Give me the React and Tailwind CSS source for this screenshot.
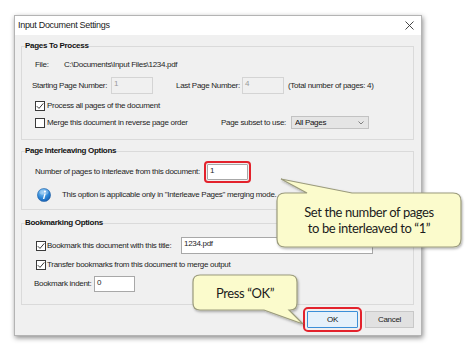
import React from "react";

function Check({ checked }) {
  return (
    <span className="w-[10px] h-[10px] border border-[#3a3a3a] bg-white flex items-center justify-center shrink-0">
      {checked && (
        <svg width="8" height="8" viewBox="0 0 8 8">
          <path d="M0.8 4.2 L3 6.4 L7.3 1.4" fill="none" stroke="#222" strokeWidth="0.9" />
        </svg>
      )}
    </span>
  );
}

function Group({ title, children, className = "" }) {
  return (
    <fieldset className={"border border-[#dadada] " + className}>
      <legend className="ml-[3px] px-0 font-bold leading-[10px] text-[8px] tracking-[-0.3px] text-[#111]">
        {title}
      </legend>
      {children}
    </fieldset>
  );
}

function InfoIcon() {
  return (
    <svg width="14" height="14" viewBox="0 0 14 14" className="shrink-0">
      <defs>
        <radialGradient id="ig" cx="0.4" cy="0.3" r="0.8">
          <stop offset="0" stopColor="#8cc8f5" />
          <stop offset="0.55" stopColor="#2c86d6" />
          <stop offset="1" stopColor="#1456a8" />
        </radialGradient>
      </defs>
      <circle cx="7" cy="7" r="6.6" fill="url(#ig)" stroke="#1a5aa0" strokeWidth="0.5" />
      <ellipse cx="7" cy="4.2" rx="4.6" ry="2.6" fill="#ffffff" opacity="0.25" />
      <circle cx="7.9" cy="3.6" r="1.1" fill="#fff" />
      <path d="M7.4 5.6 L5.9 11 L7.3 11 L8.8 5.6 Z" fill="#fff" />
    </svg>
  );
}

export default function App() {
  return (
    <div className="relative w-[474px] h-[351px] bg-white overflow-hidden font-['Liberation_Sans',Arial,sans-serif] text-[8px] tracking-[-0.3px] text-[#1e1e1e]">
      <div className="ml-[14px] mt-[15px] w-[408px] h-[321px] border border-[#b4b4b4] shadow-[1px_2px_5px_rgba(0,0,0,0.45)] flex flex-col">
        {/* title bar */}
        <div className="h-[19px] bg-white flex items-center justify-between pl-[3px] pr-[7px] shrink-0">
          <span className="text-[9px] text-[#222]">Input Document Settings</span>
          <svg width="9" height="9" viewBox="0 0 9 9">
            <path d="M0.5 0.5 L8.5 8.5 M8.5 0.5 L0.5 8.5" stroke="#333" strokeWidth="0.9" />
          </svg>
        </div>
        {/* body */}
        <div className="flex-1 bg-[#f0f0f0] pl-[6px] pr-[7px] pt-[6px] flex flex-col">
          <Group title="Pages To Process">
            <div className="pt-[8px] pb-[10px] flex flex-col">
              <div className="h-[12px] flex items-center pl-[13px]">
                <span className="w-[29px]">File:</span>
                <span>C:\Documents\Input Files\1234.pdf</span>
              </div>
              <div className="mt-[6px] h-[17px] flex items-center pl-[10px]">
                <span className="w-[79px]">Starting Page Number:</span>
                <div className="w-[42px] h-[17px] border border-[#d4d4d4] bg-[#f0f0f0] text-[#9a9a9a] pl-[2px] leading-[11px]">1</div>
                <span className="ml-[23px] w-[66px]">Last Page Number:</span>
                <div className="w-[42px] h-[17px] border border-[#d4d4d4] bg-[#f0f0f0] text-[#9a9a9a] pl-[2px] leading-[11px]">4</div>
                <span className="ml-[4px]">(Total number of pages: 4)</span>
              </div>
              <div className="mt-[6px] h-[12px] flex items-center pl-[13px] gap-[2px]">
                <Check checked />
                <span>Process all pages of the document</span>
              </div>
              <div className="mt-[4px] h-[13px] flex items-center pl-[13px]">
                <Check />
                <span className="ml-[2px] w-[174px]">Merge this document in reverse page order</span>
                <span className="w-[70px]">Page subset to use:</span>
                <div className="w-[78px] h-[13px] border border-[#c2c2c2] bg-[#e5e5e5] flex items-center justify-between pl-[3px] pr-[4px] text-[#111]">
                  <span>All Pages</span>
                  <svg width="6" height="4" viewBox="0 0 6 4">
                    <path d="M0.5 0.5 L3 3 L5.5 0.5" fill="none" stroke="#666" strokeWidth="0.8" />
                  </svg>
                </div>
              </div>
            </div>
          </Group>

          <Group title="Page Interleaving Options" className="mt-[6px]">
            <div className="pt-[8px] pb-[7px] flex flex-col">
              <div className="h-[16px] flex items-center pl-[13px]">
                <span className="w-[172px]">Number of pages to interleave from this document:</span>
                <div className="w-[41px] h-[16px] border border-[#a8a8a8] bg-white pl-[2px] leading-[11px] rounded-[1px] outline-2 outline-[#e3222c] outline-offset-[1px]">1</div>
              </div>
              <div className="mt-[8px] h-[14px] flex items-center pl-[15px]">
                <InfoIcon />
                <span className="ml-[11px]">This option is applicable only in "Interleave Pages" merging mode.</span>
              </div>
            </div>
          </Group>

          <Group title="Bookmarking Options" className="mt-[8px]">
            <div className="pt-[9px] pb-[12px] flex flex-col">
              <div className="h-[17px] flex items-center pl-[14px]">
                <Check checked />
                <span className="ml-[1px] w-[134px]">Bookmark this document with this title:</span>
                <div className="w-[192px] h-[17px] border border-[#a8a8a8] bg-white pl-[2px] leading-[11px]">1234.pdf</div>
              </div>
              <div className="mt-[5px] h-[12px] flex items-center pl-[14px] gap-[1px]">
                <Check checked />
                <span>Transfer bookmarks from this document to merge output</span>
              </div>
              <div className="mt-[5px] h-[16px] flex items-center pl-[12px]">
                <span className="w-[60px]">Bookmark indent:</span>
                <div className="w-[41px] h-[16px] border border-[#a8a8a8] bg-white pl-[2px] leading-[11px]">0</div>
              </div>
            </div>
          </Group>

          <div className="mt-[6px] flex justify-end gap-[7px]">
            <button className="w-[51px] h-[17px] border border-[#3c8fd8] bg-[#e5f1fb] text-[8px] text-[#111] rounded-[1px] outline-2 outline-[#e3222c] outline-offset-[2px]">
              OK
            </button>
            <button className="w-[49px] h-[17px] border border-[#c8c8c8] bg-[#e1e1e1] text-[8px] text-[#222]">
              Cancel
            </button>
          </div>
        </div>
      </div>

      {/* callouts */}
      <svg className="absolute left-0 top-0 pointer-events-none" width="474" height="351" viewBox="0 0 474 351">
        <defs>
          <filter id="sh" x="-10%" y="-10%" width="130%" height="140%">
            <feDropShadow dx="1" dy="1.5" stdDeviation="1.2" floodColor="#000" floodOpacity="0.3" />
          </filter>
        </defs>
        <path
          d="M285 193 L307 193 L281 179 L352 193 L453 193 Q461 193 461 201 L461 239 Q461 247 453 247 L285 247 Q277 247 277 239 L277 201 Q277 193 285 193 Z"
          fill="#fbfbcc"
          stroke="#9b9b7c"
          strokeWidth="1.2"
          filter="url(#sh)"
        />
        <path
          d="M200 275 L290 275 Q297 275 297 282 L297 303 Q297 310 290 310 L289 310 L303 324 L264 310 L200 310 Q193 310 193 303 L193 282 Q193 275 200 275 Z"
          fill="#fbfbcc"
          stroke="#9b9b7c"
          strokeWidth="1.2"
          filter="url(#sh)"
        />
      </svg>
      <div className="absolute left-[277px] top-[196px] w-[184px] h-[48px] flex flex-col items-center justify-center font-['Lato',sans-serif] text-[13px] leading-[16px] tracking-[-0.4px] text-[#1c1c1c]">
        <span>Set the number of pages</span>
        <span>to be interleaved to “1”</span>
      </div>
      <div className="absolute left-[193px] top-[275px] w-[104px] h-[35px] flex items-center justify-center font-['Lato',sans-serif] text-[13px] leading-[16px] tracking-[-0.4px] text-[#1c1c1c]">
        <span>Press “OK”</span>
      </div>
    </div>
  );
}
